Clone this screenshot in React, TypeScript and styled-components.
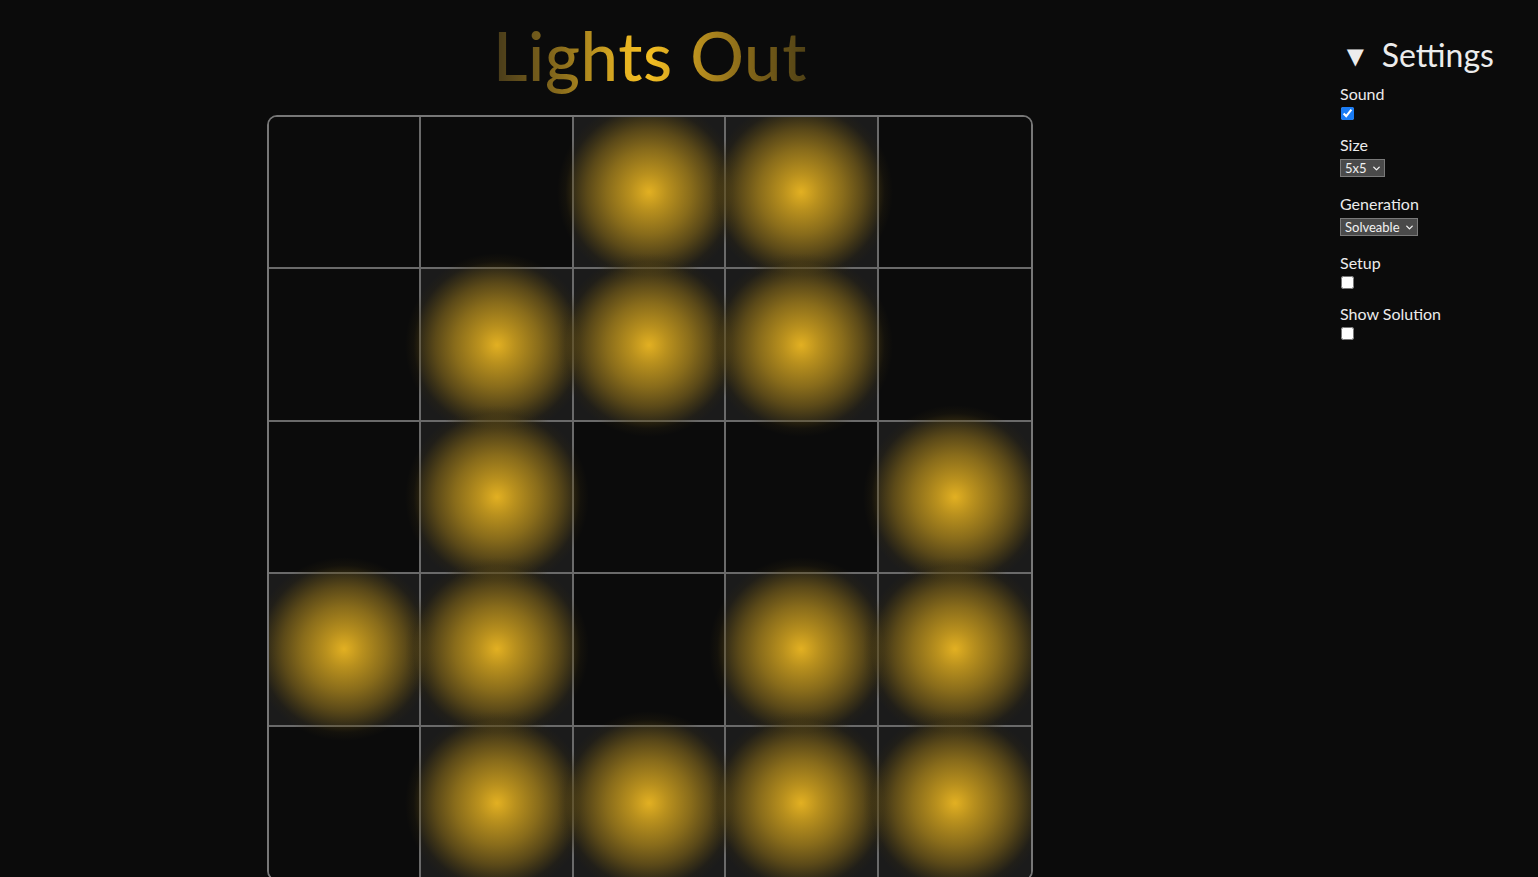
import React, { useState } from "react"
import styled, { createGlobalStyle, css } from "styled-components"
import { ChevronDown } from "lucide-react"

const GlobalStyle = createGlobalStyle`
  html, body {
    margin: 0;
    padding: 0;
    background: #0b0b0b;
    color: #ececec;
    font-family: Lato, "Open Sans", sans-serif;
  }
`

const START: number[][] = [
  [0, 0, 1, 1, 0],
  [0, 1, 1, 1, 0],
  [0, 1, 0, 0, 1],
  [1, 1, 0, 1, 1],
  [0, 1, 1, 1, 1],
]

const App: React.FC = () => {
  const [board, setBoard] = useState(START)
  const [sound, setSound] = useState(true)
  const [setup, setSetup] = useState(false)
  const [solution, setSolution] = useState(false)

  const toggle = (r: number, c: number) => {
    setBoard((b) =>
      b.map((row, y) =>
        row.map((v, x) =>
          (y === r && Math.abs(x - c) <= 1) || (x === c && Math.abs(y - r) === 1)
            ? 1 - v
            : v
        )
      )
    )
  }

  return (
    <Page>
      <GlobalStyle />
      <Main>
        <Title>Lights Out</Title>
        <Board>
          {board.map((row, r) =>
            row.map((v, c) => (
              <Cell
                key={`${r}-${c}`}
                $lit={v === 1}
                $lastCol={c === 4}
                $lastRow={r === 4}
                onClick={() => toggle(r, c)}
              />
            ))
          )}
        </Board>
      </Main>
      <Aside>
        <Details open>
          <Summary>
            <Marker>▼</Marker>Settings
          </Summary>
          <Field>
            <Label>Sound</Label>
            <Check
              type="checkbox"
              checked={sound}
              onChange={(e) => setSound(e.target.checked)}
            />
          </Field>
          <Field>
            <Label>Size</Label>
            <SelectWrap>
              <Select defaultValue="5x5">
                <option>3x3</option>
                <option>4x4</option>
                <option>5x5</option>
                <option>6x6</option>
              </Select>
              <Chevron size={11} strokeWidth={3} />
            </SelectWrap>
          </Field>
          <Field>
            <Label>Generation</Label>
            <SelectWrap>
              <Select defaultValue="Solveable">
                <option>Solveable</option>
                <option>Random</option>
              </Select>
              <Chevron size={11} strokeWidth={3} />
            </SelectWrap>
          </Field>
          <Field>
            <Label>Setup</Label>
            <Check
              type="checkbox"
              checked={setup}
              onChange={(e) => setSetup(e.target.checked)}
            />
          </Field>
          <Field>
            <Label>Show Solution</Label>
            <Check
              type="checkbox"
              checked={solution}
              onChange={(e) => setSolution(e.target.checked)}
            />
          </Field>
        </Details>
      </Aside>
    </Page>
  )
}

export default App

const Page = styled.div`
  display: flex;
  min-height: 100vh;
  background: #0b0b0b;
`
const Main = styled.main`
  flex: 1;
  display: flex;
  flex-direction: column;
  align-items: center;
`
const Title = styled.h1`
  margin: 0;
  padding-top: 15px;
  height: 115px;
  box-sizing: border-box;
  font-size: 67px;
  line-height: 80px;
  font-weight: 500;
  letter-spacing: 0.6px;
  background: linear-gradient(
    90deg,
    #45391a 0%,
    #8c6e1c 22%,
    #e6b322 42%,
    #f2bd22 50%,
    #b68d1e 66%,
    #7a5f18 84%,
    #4f4116 100%
  );
  -webkit-background-clip: text;
  background-clip: text;
  color: transparent;
`
const Board = styled.div`
  display: grid;
  grid-template-columns: repeat(5, 1fr);
  grid-template-rows: repeat(5, 1fr);
  width: 762px;
  height: 762px;
  border: 2px solid #777;
  border-radius: 10px;
  overflow: hidden;
  background: #0b0b0b;
`
const Cell = styled.div<{ $lit: boolean; $lastCol: boolean; $lastRow: boolean }>`
  position: relative;
  cursor: pointer;
  background: ${(p) => (p.$lit ? "#1b1b1b" : "#0b0b0b")};
  border-right: ${(p) => (p.$lastCol ? "none" : "2px solid #6a6a6a")};
  border-bottom: ${(p) => (p.$lastRow ? "none" : "2px solid #6a6a6a")};
  ${(p) =>
    p.$lit &&
    css`
      &::after {
        content: "";
        position: absolute;
        left: 50%;
        top: 50%;
        width: 184px;
        height: 184px;
        transform: translate(-50%, -50%);
        border-radius: 50%;
        pointer-events: none;
        z-index: 1;
        background: radial-gradient(
          circle closest-side,
          rgba(226, 176, 34, 1) 0%,
          rgba(198, 154, 30, 0.92) 20%,
          rgba(164, 128, 27, 0.8) 46%,
          rgba(128, 100, 23, 0.64) 67%,
          rgba(96, 76, 19, 0.46) 80%,
          rgba(60, 48, 14, 0.18) 91%,
          rgba(40, 32, 10, 0) 100%
        );
      }
    `}
`
const Aside = styled.aside`
  width: 198px;
  padding: 36px 0 0 40px;
  flex-shrink: 0;
`
const Details = styled.details`
  color: #ececec;
`
const Summary = styled.summary`
  list-style: none;
  display: flex;
  align-items: center;
  font-size: 32px;
  line-height: 38px;
  margin-bottom: 10px;
  cursor: pointer;
  &::-webkit-details-marker {
    display: none;
  }
`
const Marker = styled.span`
  font-size: 29px;
  margin: 0 12px 0 1px;
`
const Field = styled.div`
  margin-bottom: 15px;
`
const Label = styled.div`
  font-size: 16px;
  line-height: 20px;
  color: #ececec;
`
const Check = styled.input`
  display: block;
  width: 13px;
  height: 13px;
  margin: 3px 0 3px 1px;
  accent-color: #1a7cf4;
`
const SelectWrap = styled.div`
  position: relative;
  display: inline-block;
  margin: 4px 0 2px 0;
  vertical-align: top;
`
const Select = styled.select`
  appearance: none;
  display: block;
  height: 18px;
  padding: 0 17px 0 4px;
  border: 1px solid #7a7a7a;
  border-radius: 0;
  background: #4a4a4a;
  color: #f2f2f2;
  font-family: Lato, "Open Sans", sans-serif;
  font-size: 13px;
  line-height: 16px;
`
const Chevron = styled(ChevronDown)`
  position: absolute;
  right: 3px;
  top: 4px;
  color: #f2f2f2;
  pointer-events: none;
`
